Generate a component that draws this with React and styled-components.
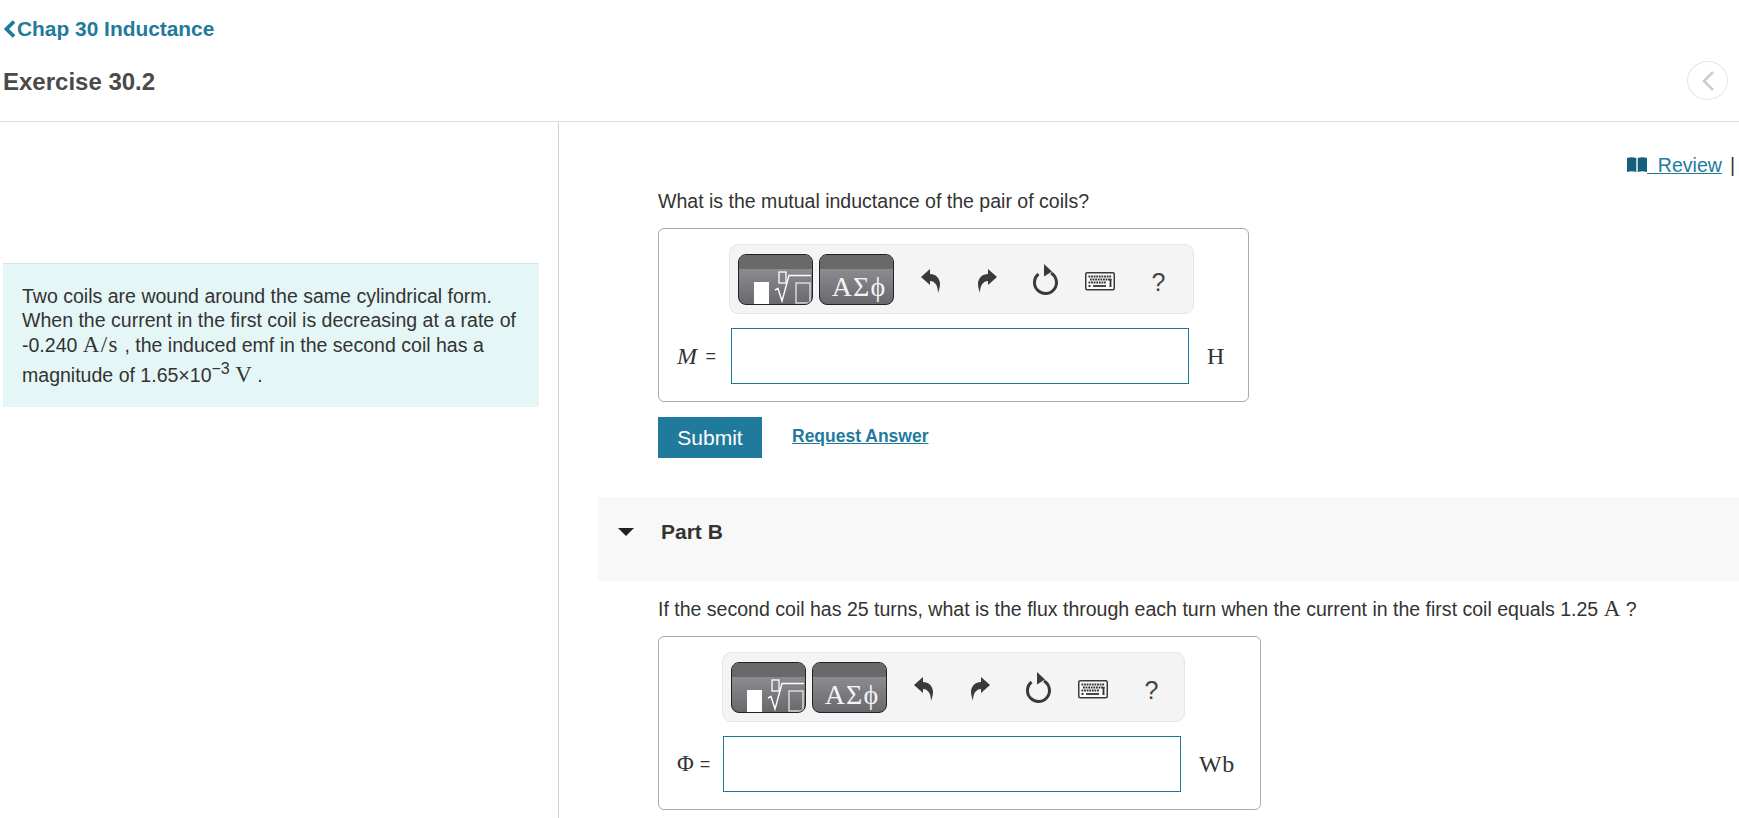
import React from 'react';
import styled, { createGlobalStyle } from 'styled-components';

const Global = createGlobalStyle`
  html, body { margin: 0; padding: 0; background: #fff; overflow: hidden; }
  body { font-family: "Liberation Sans", Arial, sans-serif; color: #333; }
`;
const Page = styled.div`width: 1739px; height: 818px; overflow: hidden; display: flex; flex-direction: column;`;
const Header = styled.header`
  height: 122px; box-sizing: border-box; border-bottom: 1px solid #ddd; flex: none;
  padding: 17px 11px 0 3px; display: grid; grid-template-columns: 1fr 41px; grid-template-rows: 23px 41px; row-gap: 21px;
`;
const BackLink = styled.a`
  grid-column: 1 / 3; display: flex; align-items: center; color: #1f7a9c; font-weight: 700; font-size: 20.9px; line-height: 23px;
  svg { margin-right: 1px; }
`;
const Title = styled.h1`margin: 0; font-size: 24px; line-height: 41px; font-weight: 700; color: #4a4a4a;`;
const Circle = styled.button`
  width: 41px; height: 39px; border-radius: 50%; border: 1px solid #e6e6e6; background: #fff; padding: 0;
  display: flex; align-items: center; justify-content: center;
`;
const Body = styled.div`flex: 1; display: grid; grid-template-columns: 559px 1fr; min-height: 0;`;
const LeftPane = styled.aside`border-right: 1px solid #c5d5e2; padding: 141px 0 0 3px; box-sizing: border-box;`;
const Intro = styled.div`
  width: 536px; height: 144px; box-sizing: border-box; background: #e5f6f7; border-top: 1px solid #d9e3e4;
  padding: 20px 19px 0; font-size: 19.55px; color: #333;
`;
const IntroLine = styled.div`height: 24px; line-height: 24px; white-space: nowrap; margin-top: ${p => p.$mt || 0}px;`;
const RightPane = styled.main`padding-top: 31px; min-width: 0;`;
const ReviewRow = styled.div`height: 24px; display: flex; justify-content: flex-end; align-items: center; padding-right: 4px; font-size: 19.55px; color: #1f7a9c;`;
const ReviewLink = styled.a`
  display: flex; align-items: center; color: #1f7a9c; text-decoration: underline; white-space: pre;
`;
const Sep = styled.span`color: #333; margin-left: 8px;`;
const Content = styled.div`padding-left: 99px;`;
const Question = styled.p`margin: ${p => p.$mt}px 0 0; font-size: 19.55px; line-height: 24px; color: #333;`;
const AnswerBox = styled.div`
  width: ${p => p.$w}px; height: 174px; box-sizing: border-box; border: 1px solid #aaa; border-radius: 6px;
  margin-top: ${p => p.$mt}px; padding-top: 15px; display: grid; grid-template-columns: ${p => p.$label}px 458px 1fr;
  grid-template-rows: 70px 56px; row-gap: 14px; align-items: center;
`;
const Toolbar = styled.div`
  grid-column: 2; width: ${p => p.$w}px; height: 70px; box-sizing: border-box; margin-left: ${p => p.$ml}px;
  background: #f4f4f4; border: 1px solid #e6e6e6; border-radius: 9px; padding: 0 0 0 8px; display: flex; align-items: center;
`;
const PaletteButton = styled.button`
  width: 75px; height: 51px; box-sizing: border-box; margin-right: 6px; padding: 0; border: 1px solid #222; border-radius: 8px;
  overflow: hidden; display: flex; flex-direction: column; background: linear-gradient(#98989e, #69696d); color: #fff;
`;
const PaletteTop = styled.span`display: block; flex: none; height: 14px; background: #696969;`;
const PaletteBody = styled.span`
  flex: 1; display: flex; align-items: flex-end; justify-content: center; font-family: "Liberation Serif", serif; font-size: 28px; line-height: 35px;
  letter-spacing: 1px; color: #f4f4f4; width: 100%; padding-left: ${p => p.$pl || 0}px; box-sizing: border-box;
`;
const IconSlot = styled.span`
  width: 57px; height: 30px; flex: none; display: flex; align-items: center; justify-content: center; color: #3a3a3a; margin-top: ${p => p.$mt || 0}px;
`;
const FirstSlot = styled(IconSlot)`margin-left: 2px;`;
const Help = styled.span`font-size: 25px; color: #444; line-height: 24px;`;
const Label = styled.div`
  padding-left: 18px; font-size: 18px; white-space: nowrap; color: #333; display: flex; align-items: center; gap: ${p => p.$gap}px;
`;
const MathVar = styled.span`font-family: "Liberation Serif", serif; font-size: ${p => p.$s || 23}px; font-style: ${p => p.$i ? 'italic' : 'normal'}; line-height: 0; letter-spacing: ${p => p.$ls || 0}px;`;
const Input = styled.div`height: 56px; box-sizing: border-box; border: 1px solid #1f7a9c; background: #fff;`;
const Unit = styled.div`padding-left: 18px; font-family: "Liberation Serif", serif; font-size: 24px; letter-spacing: .7px; color: #333;`;
const Actions = styled.div`display: flex; align-items: center; margin-top: 15px; height: 41px;`;
const Submit = styled.button`
  width: 104px; height: 41px; border: 0; background: #1f7a9c; color: #fff; font: 21px "Liberation Sans", sans-serif; padding: 0;
`;
const RequestLink = styled.a`margin: 0 0 2px 30px; color: #1f7a9c; font-weight: 700; font-size: 17.5px; text-decoration: underline;`;
const PartBar = styled.div`
  margin: 39px 0 0 39px; height: 84px; background: #f8f8f8; display: flex; align-items: flex-start; padding: 24px 0 0 20px; box-sizing: border-box;
`;
const Caret = styled.span`
  width: 0; height: 0; border-left: 8px solid transparent; border-right: 8px solid transparent; border-top: 8px solid #222; margin-top: 7px; margin-right: 27px;
`;
const PartTitle = styled.h2`margin: 0; font-size: 21px; line-height: 22px; font-weight: 700; color: #333;`;

const Undo = ({ flip }) => (
  <svg width="21" height="26" viewBox="0 0 20 26" style={flip ? { transform: 'scaleX(-1)' } : undefined}>
    <path fill="currentColor" d="M.5 9 L9.5 1 V6 C15 6 19.5 10 19.5 16 C19.5 19 18.5 22 17.5 25 C17.5 18 15 13.5 9.5 13 V17 Z" />
  </svg>
);
const Reset = () => (
  <svg width="28" height="32" viewBox="0 0 28 32">
    <path fill="none" stroke="currentColor" strokeWidth="3" d="M7.5 10 A11 11 0 1 0 20 9" />
    <path fill="currentColor" d="M13 0 L21 7.5 L13 12.5 Z" />
  </svg>
);
const Keyboard = () => (
  <svg width="30" height="19" viewBox="0 0 30 19" style={{ marginLeft: -4 }}>
    <rect x=".75" y=".75" width="28.5" height="17" rx="1.5" fill="#fafafa" stroke="#3a3a3a" strokeWidth="1.5" />
    <path stroke="#333" strokeWidth="1.8" strokeDasharray="1.8 .8" d="M3.5 4.5 H26.5 M5 7.5 H26.5 M3.5 10.5 H21" />
    <path stroke="#333" strokeWidth="1.8" d="M3.5 14 H5.5 M24.5 14 H26.5 M25.5 7 V14" />
    <path stroke="#333" strokeWidth="1.8" d="M8 14 H21" />
  </svg>
);
const Book = () => (
  <svg width="20" height="16" viewBox="0 0 20 16">
    <path fill="#155f7c" d="M0 1 C3 0 6 0 9.3 1 V15 C6 14 3 14 0 15 Z M10.7 1 C14 0 17 0 20 1 V15 C17 14 14 14 10.7 15 Z" />
  </svg>
);
const Template = () => (
  <svg width="73" height="35" viewBox="0 0 73 35" style={{ display: 'block', flex: 'none' }}>
    <rect x="15" y="13" width="15" height="22" fill="#fff" />
    <rect x="40" y="3" width="7" height="11" fill="none" stroke="#fff" strokeWidth="1.3" />
    <path d="M36 21 L39 19.5 L43 32 L50 6.5 H72" fill="none" stroke="#fff" strokeWidth="1.4" />
    <rect x="57" y="14" width="14" height="20" fill="none" stroke="#e8e8e8" strokeWidth="1.3" />
  </svg>
);

const Tools = ({ w, ml }) => (
  <Toolbar $w={w} $ml={ml}>
    <PaletteButton><PaletteTop /><PaletteBody><Template /></PaletteBody></PaletteButton>
    <PaletteButton><PaletteTop /><PaletteBody $pl={5}>ΑΣϕ</PaletteBody></PaletteButton>
    <FirstSlot $mt={3}><Undo /></FirstSlot>
    <IconSlot $mt={3}><Undo flip /></IconSlot>
    <IconSlot $mt={2}><Reset /></IconSlot>
    <IconSlot $mt={4}><Keyboard /></IconSlot>
    <IconSlot $mt={5}><Help>?</Help></IconSlot>
  </Toolbar>
);

export default function App() {
  return (
    <Page>
      <Global />
      <Header>
        <BackLink>
          <svg width="13" height="20" viewBox="0 0 13 20"><path d="M11 2.5 L3.5 10 L11 17.5" fill="none" stroke="#1f7a9c" strokeWidth="3.8" /></svg>
          Chap 30 Inductance
        </BackLink>
        <Title>Exercise 30.2</Title>
        <Circle>
          <svg width="14" height="22" viewBox="0 0 14 22"><path d="M12 2 L3 11 L12 20" fill="none" stroke="#ccc" strokeWidth="2.6" /></svg>
        </Circle>
      </Header>
      <Body>
        <LeftPane>
          <Intro>
            <IntroLine>Two coils are wound around the same cylindrical form.</IntroLine>
            <IntroLine>When the current in the first coil is decreasing at a rate of</IntroLine>
            <IntroLine $mt={1}>-0.240 <MathVar $ls={1.4}>A/s</MathVar> , the induced emf in the second coil has a</IntroLine>
            <IntroLine $mt={6}>magnitude of 1.65×10<sup style={{ fontSize: 16, lineHeight: 0 }}>−3</sup> <MathVar>V</MathVar> .</IntroLine>
          </Intro>
        </LeftPane>
        <RightPane>
          <ReviewRow>
            <ReviewLink><Book />  Review</ReviewLink><Sep>|</Sep>
          </ReviewRow>
          <Content>
            <Question $mt={12}>What is the mutual inductance of the pair of coils?</Question>
            <AnswerBox $w={591} $mt={15} $label={72}>
              <Tools w={465} ml={-2} />
              <span />
              <Label $gap={8}><MathVar $i $s={24} $ls={.5}>M</MathVar> =</Label>
              <Input />
              <Unit>H</Unit>
            </AnswerBox>
            <Actions>
              <Submit>Submit</Submit>
              <RequestLink>Request Answer</RequestLink>
            </Actions>
          </Content>
          <PartBar>
            <Caret />
            <PartTitle>Part B</PartTitle>
          </PartBar>
          <Content>
            <Question $mt={16}>If the second coil has 25 turns, what is the flux through each turn when the current in the first coil equals 1.25 <MathVar>A</MathVar> ?</Question>
            <AnswerBox $w={603} $mt={15} $label={64}>
              <Tools w={463} ml={-1} />
              <span />
              <Label $gap={6}><MathVar>Φ</MathVar> =</Label>
              <Input />
              <Unit>Wb</Unit>
            </AnswerBox>
          </Content>
        </RightPane>
      </Body>
    </Page>
  );
}
